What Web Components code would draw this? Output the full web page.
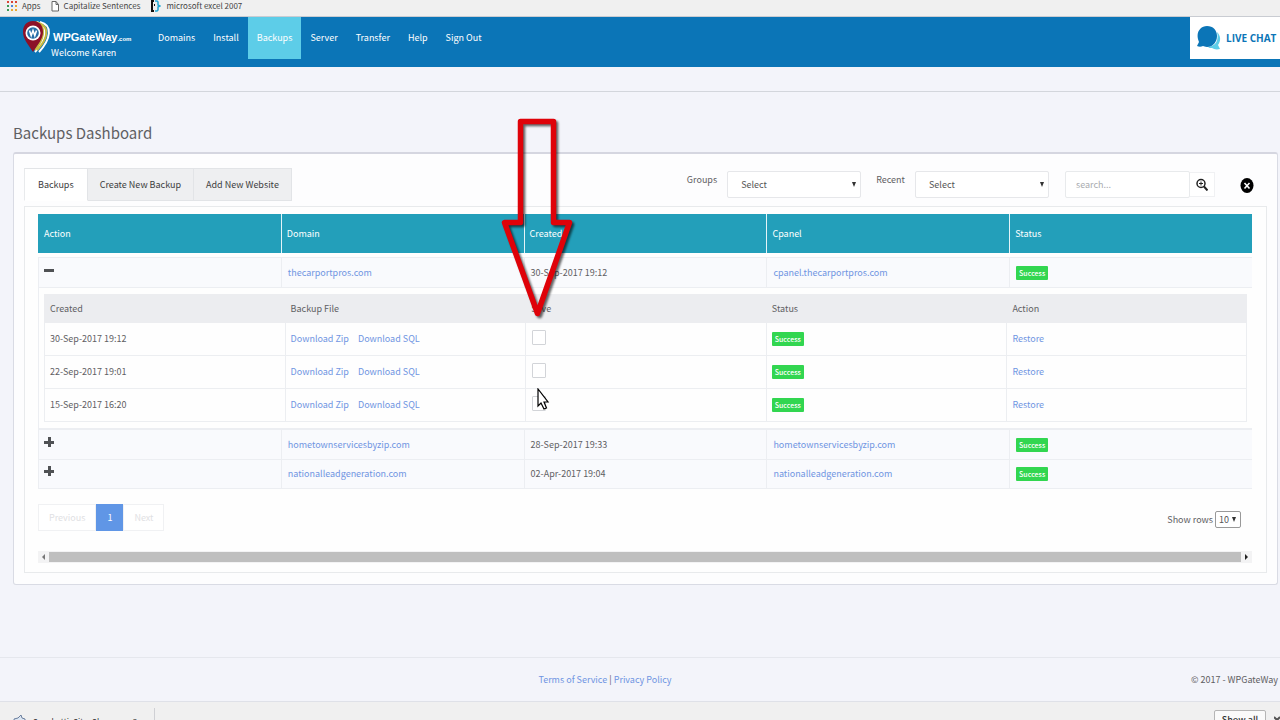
<!DOCTYPE html>
<html lang="en">
<head>
<meta charset="utf-8">
<title>Backups Dashboard</title>
<style>
    :root {
        --text: #5f6063;
        --link: #7095e2;
        --line: #e8eaec;
        --blue: #0b75b7;
        --teal: #239fba;
    }
    html { height: 100%; }
    body {
        margin: 0;
        height: 100%;
        overflow: hidden;
        position: relative;
        background: #f3f4fa;
        color: var(--text);
        font: 9px/16px "Noto Sans CJK SC", "Open Sans", sans-serif;
    }
</style>
</head>
<body>
    <bookmarks-bar></bookmarks-bar>
    <site-header user="Karen"></site-header>
    <page-title>Backups Dashboard</page-title>
    <backup-panel>
        <backup-table></backup-table>
        <table-pager></table-pager>
        <scroll-track></scroll-track>
    </backup-panel>
    <site-footer></site-footer>
    <download-shelf></download-shelf>
    <arrow-callout></arrow-callout>
    <mouse-pointer></mouse-pointer>

<script>
class BookmarksBar extends HTMLElement {
    connectedCallback() {
        this.attachShadow({ mode: 'open' });
        this.shadowRoot.innerHTML = `
            <style>
                :host {
                    display: flex;
                    gap: 10px;
                    height: 16px;
                    padding-left: 7px;
                    background: #f0f0f0;
                    border-bottom: 1px solid #c9ccd2;
                    overflow: hidden;
                    font-size: 8px;
                }
                a {
                    display: flex;
                    align-items: center;
                    gap: 5px;
                    height: 12px;
                    color: #444;
                    text-decoration: none;
                    white-space: nowrap;
                }
                svg { display: block; }
            </style>
            <a href="#"><svg width="10" height="12" viewBox="0 0 10 12">
                <path fill="#d94436" d="M0 1h2v2H0zM4 1h2v2H4zM8 1h2v2H8z"/>
                <path fill="#3a9a57" d="M0 5h2v2H0z"/><path fill="#4a86d8" d="M4 5h2v2H4z"/><path fill="#e7a935" d="M8 5h2v2H8z"/>
                <path fill="#3a9a57" d="M0 9h2v2H0z"/><path fill="#e7a935" d="M4 9h2v2H4zM8 9h2v2H8z"/>
            </svg>Apps</a>
            <a href="#"><svg width="8" height="12" viewBox="0 0 8 12" fill="#fff" stroke="#666">
                <path d="M1 1.500h4l2.500 3v6.500h-6.500zM5 1.500v3h2.500"/>
            </svg>Capitalize Sentences</a>
            <a href="#"><svg width="11" height="12" viewBox="0 0 11 12" fill="none">
                <path stroke="#111" stroke-width="2" d="M4 1H2v10h2"/><path fill="#111" d="M4 4h1v2H4z"/>
                <path stroke="#22a8d4" stroke-width="1.500" d="M5 1h2l1 1v3l2 1-2 1v3l-1 1H5"/>
            </svg>microsoft excel 2007</a>
        `;
    }
}

class SiteHeader extends HTMLElement {
    connectedCallback() {
        const items = ['Domains', 'Install', 'Backups', 'Server', 'Transfer', 'Help', 'Sign Out'];
        this.attachShadow({ mode: 'open' });
        this.shadowRoot.innerHTML = `
            <style>
                :host {
                    display: block;
                    height: 74px;
                    border-bottom: 1px solid #d3d6dc;
                }
                header {
                    display: flex;
                    align-items: flex-start;
                    height: 50px;
                    background: var(--blue);
                    color: #fff;
                }
                .logo {
                    display: flex;
                    box-sizing: border-box;
                    width: 149px;
                    padding: 4px 0 0 22px;
                    color: inherit;
                    text-decoration: none;
                }
                .logo svg { flex: none; }
                .words { line-height: 14px; padding-top: 9px; margin-left: -1px; white-space: nowrap; }
                .brand {
                    display: block;
                    margin-left: 2px;
                    font: bold 11px/14px "Liberation Sans", sans-serif;
                }
                .brand small { font-size: 6px; }
                nav { display: flex; flex: 1; }
                nav a {
                    padding: 0 9px;
                    line-height: 42px;
                    color: #fff;
                    text-decoration: none;
                }
                nav a.active { background: #5dcde8; }
                .chat {
                    display: flex;
                    align-items: center;
                    gap: 5px;
                    width: 90px;
                    height: 42px;
                    padding: 0 0 0 7px;
                    box-sizing: border-box;
                    border: 0;
                    background: #fff;
                    color: var(--blue);
                    font: bold 10px/16px "Open Sans", sans-serif;
                    white-space: nowrap;
                }
            </style>
            <header>
                <a href="#" class="logo">
                    <svg width="30" height="32" viewBox="0 0 30 32">
                        <g fill="none" stroke-width="2">
                            <path stroke="#fff" d="M18 1c13 3 11 17-1 30"/>
                            <path stroke="#fff" d="M15 1c12 4 9 17-2 30"/>
                            <path stroke="#c9ba3e" d="M14 1c11 4 8 17-1 28"/>
                            <path stroke="#c9ba3e" d="M17 2c11 4 9 16-2 27"/>
                        </g>
                        <path fill="#8c1028" d="M11 0C4 0 1 5 1 11c0 7 5 12 10 20 5-8 10-13 10-20C21 5 18 0 11 0z"/>
                        <circle cx="11" cy="12" r="7.500" fill="#fff"/>
                        <circle cx="11" cy="12" r="5.800" fill="#256da7"/>
                        <path fill="none" stroke="#fff" stroke-width="1.600" d="M7.500 9.500l1.700 5 1.800-5 1.800 5 1.700-5"/>
                    </svg>
                    <span class="words"><span class="brand">WPGateWay<small>.com</small></span>Welcome ${this.getAttribute('user')}</span>
                </a>
                <nav>${items.map(name => `<a href="#"${name === 'Backups' ? ' class="active"' : ''}>${name}</a>`).join('')}</nav>
                <button class="chat">
                    <svg width="24" height="24" viewBox="0 0 24 24">
                        <path fill="#5dcde8" d="M20 6c4 4 4 9 1 13l2 4c-4 1-6 0-8-1-2 0-3 0-4-1 8-1 11-7 9-15z"/>
                        <path fill="var(--blue)" d="M10 0c6 0 10 4 10 10s-4 11-10 11c-2 0-3-1-4-1-2 1-4 1-6 0l2-4C-2 7 3 0 10 0z"/>
                    </svg>LIVE CHAT
                </button>
            </header>
        `;
    }
}

class PageTitle extends HTMLElement {
    connectedCallback() {
        this.attachShadow({ mode: 'open' });
        this.shadowRoot.innerHTML = `
            <style>
                :host { display: block; padding: 29px 13px 7px; }
                h1 { margin: 0; font-size: 15px; line-height: 24px; font-weight: 400; }
            </style>
            <h1><slot></slot></h1>
        `;
    }
}

// Select with a small triangle laid in the same grid cell
class DropDown extends HTMLElement {
    connectedCallback() {
        this.attachShadow({ mode: 'open' });
        this.shadowRoot.innerHTML = `
            <style>
                :host { display: block; }
                label {
                    display: flex;
                    gap: var(--label-gap, 10px);
                    line-height: 18px;
                    white-space: nowrap;
                }
                .box { display: grid; width: var(--box-width, 134px); align-items: center; }
                select, svg { grid-area: 1 / 1; }
                select {
                    appearance: none;
                    box-sizing: border-box;
                    width: 100%;
                    height: var(--box-height, 27px);
                    margin: 0;
                    padding: 0 0 0 var(--box-indent, 13px);
                    border: 1px solid var(--box-line, #e6e7ea);
                    border-radius: 2px;
                    background: #fff;
                    color: #555;
                    font: inherit;
                    line-height: 15px;
                }
                svg { justify-self: end; margin-right: 5px; pointer-events: none; }
            </style>
            <label>${this.getAttribute('label')}
                <span class="box">
                    <select><option>${this.getAttribute('value')}</option></select>
                    <svg width="4" height="5" viewBox="0 0 4 5"><path fill="#333" d="M0 0h4L2 5z"/></svg>
                </span>
            </label>
        `;
    }
}

class BackupPanel extends HTMLElement {
    connectedCallback() {
        this.attachShadow({ mode: 'open' });
        this.shadowRoot.innerHTML = `
            <style>
                :host {
                    display: block;
                    margin: 0 2px 0 13px;
                    padding: 14px 10px 11px;
                    border: 1px solid #d9dbe4;
                    border-top: 2px solid #d5d6e0;
                    border-radius: 3px;
                    background: #fdfdfe;
                }
                .bar { display: flex; align-items: flex-start; height: 38px; }
                .tabs { display: flex; flex: 1; }
                .tabs button {
                    height: 33px;
                    padding: 0 12px;
                    border: 1px solid #e2e4e7;
                    border-left: 0;
                    background: #eeeff1;
                    color: #3c3d40;
                    font: inherit;
                }
                .tabs button.active {
                    padding: 0 13px;
                    border-left: 1px solid var(--line);
                    border-bottom-color: #fff;
                    background: #fff;
                }
                .filters { display: flex; align-items: flex-start; gap: 15px; padding-top: 3px; }
                .search { display: flex; align-items: center; margin-left: 1px; }
                .search input {
                    box-sizing: border-box;
                    width: 125px;
                    height: 27px;
                    padding: 0 10px;
                    border: 1px solid var(--line);
                    border-radius: 2px;
                    background: #fff;
                    font: inherit;
                }
                .search input::placeholder { color: #aaacb0; }
                .search button, .close {
                    display: grid;
                    place-items: center;
                    width: 25px;
                    height: 25px;
                    padding: 0;
                    border: 1px solid #f0f1f3;
                    border-left: 0;
                    background: #fff;
                }
                .close { margin: 2px 8px 0 4px; border: 0; background: none; }
                .body { padding: 7px 14px 9px 13px; border: 1px solid var(--line); background: #fefefe; }
            </style>
            <div class="bar">
                <div class="tabs" role="tablist">
                    <button role="tab" class="active" aria-selected="true">Backups</button>
                    <button role="tab">Create New Backup</button>
                    <button role="tab">Add New Website</button>
                </div>
                <form class="filters">
                    <drop-down label="Groups" value="Select"></drop-down>
                    <drop-down label="Recent" value="Select"></drop-down>
                    <div class="search">
                        <input type="text" placeholder="search..." aria-label="Search">
                        <button type="button" aria-label="Find"><svg width="12" height="13" viewBox="0 0 12 13" fill="none" stroke="#222">
                            <circle cx="5" cy="5.500" r="4" stroke-width="1.500"/><path d="M3 5.500h4M5 3.500v4"/><path stroke-width="2" d="M8 8.500l3.500 4"/>
                        </svg></button>
                    </div>
                    <button type="button" class="close" aria-label="Clear"><svg width="14" height="15" viewBox="0 0 14 15">
                        <ellipse cx="7" cy="7.500" rx="6.500" ry="7.500"/><path stroke="#fff" stroke-width="1.600" d="M4.500 5l5 5.500M9.500 5l-5 5.500"/>
                    </svg></button>
                </form>
            </div>
            <div class="body"><slot></slot></div>
        `;
    }
}

class StatusBadge extends HTMLElement {
    connectedCallback() {
        this.attachShadow({ mode: 'open' });
        this.shadowRoot.innerHTML = `
            <style>
                :host {
                    display: block;
                    width: 32px;
                    border-radius: 1px;
                    background: #32d650;
                    color: #fff;
                    font-size: 7px;
                    line-height: 14px;
                    font-weight: 500;
                    text-align: center;
                }
            </style>
            <slot></slot>
        `;
    }
}

class BackupTable extends HTMLElement {
    connectedCallback() {
        const sites = [
            { domain: 'thecarportpros.com', created: '30-Sep-2017 19:12', cpanel: 'cpanel.thecarportpros.com', backups: ['30-Sep-2017 19:12', '22-Sep-2017 19:01', '15-Sep-2017 16:20'] },
            { domain: 'hometownservicesbyzip.com', created: '28-Sep-2017 19:33', cpanel: 'hometownservicesbyzip.com' },
            { domain: 'nationalleadgeneration.com', created: '02-Apr-2017 19:04', cpanel: 'nationalleadgeneration.com' }
        ];

        const backupRow = created => `
            <tr>
                <td>${created}</td>
                <td><a href="#">Download Zip</a><a href="#" class="sql">Download SQL</a></td>
                <td><input type="checkbox" aria-label="Save ${created}"></td>
                <td><status-badge>Success</status-badge></td>
                <td><a href="#">Restore</a></td>
            </tr>`;

        const detail = backups => `
            <tr>
                <td class="detail" colspan="5">
                    <table class="inner">
                        <thead><tr><th>Created</th><th>Backup File</th><th>Save</th><th>Status</th><th>Action</th></tr></thead>
                        <tbody>${backups.map(backupRow).join('')}</tbody>
                    </table>
                </td>
            </tr>`;

        const siteRow = site => `
            <tr class="site">
                <td><button aria-label="Toggle ${site.domain}"><svg width="10" height="10" viewBox="0 0 10 10">
                    <path fill="#4f5154" d="${site.backups ? 'M0 4h10v3H0z' : 'M4 0h3v4h3v3H7v3H4V7H0V4h4z'}"/>
                </svg></button></td>
                <td><a href="#">${site.domain}</a></td>
                <td>${site.created}</td>
                <td><a href="#">${site.cpanel}</a></td>
                <td><status-badge>Success</status-badge></td>
            </tr>
            ${site.backups ? detail(site.backups) : ''}`;

        this.attachShadow({ mode: 'open' });
        this.shadowRoot.innerHTML = `
            <style>
                :host { display: block; }
                table {
                    width: 100%;
                    table-layout: fixed;
                    border-collapse: separate;
                    border-spacing: 0;
                }
                th, td { box-sizing: border-box; padding: 0 5px; text-align: left; white-space: nowrap; }
                th { font-weight: 400; }
                a { color: var(--link); text-decoration: none; }
                .outer > thead th {
                    height: 39px;
                    border-left: 1px solid #e4f4f8;
                    background: var(--teal);
                    color: #fff;
                }
                .outer > thead th:first-child { border-left-color: var(--teal); }
                .gap td { height: 4px; padding: 0; }
                .site td {
                    height: 30px;
                    padding-left: 6px;
                    border: 1px solid #eceef2;
                    border-width: 1px 0 0 1px;
                    background: #f9fafd;
                }
                .site td:first-child { padding-left: 5px; }
                .outer > tbody > tr:last-child td { border-bottom-width: 1px; }
                .site button {
                    display: block;
                    margin: 0 0 6px;
                    padding: 0;
                    border: 0;
                    background: none;
                }
                .site svg { display: block; }
                .detail {
                    padding: 6px 5px 5px;
                    border: 1px solid #eceef2;
                    border-width: 1px 0 1px 1px;
                    background: #fefefe;
                }
                .inner { padding: 0 0 1px; }
                .inner th { height: 29px; padding-left: 6px; background: #ecedf0; }
                .inner td {
                    height: 33px;
                    border: 1px solid #eceef1;
                    border-width: 0 0 1px 1px;
                    background: #fefefe;
                }
                .inner td:last-child { border-right-width: 1px; }
                .sql { margin-left: 9px; }
                input {
                    display: block;
                    appearance: none;
                    box-sizing: border-box;
                    width: 14px;
                    height: 15px;
                    margin: 0 0 4px 1px;
                    border: 1px solid #d2d4d8;
                    border-radius: 1px;
                    background: #fff;
                }
            </style>
            <table class="outer">
                <thead><tr><th>Action</th><th>Domain</th><th>Created</th><th>Cpanel</th><th>Status</th></tr></thead>
                <tbody>
                    <tr class="gap"><td colspan="5"></td></tr>
                    ${sites.map(siteRow).join('')}
                </tbody>
            </table>
        `;
    }
}

class TablePager extends HTMLElement {
    connectedCallback() {
        this.attachShadow({ mode: 'open' });
        this.shadowRoot.innerHTML = `
            <style>
                :host {
                    display: flex;
                    justify-content: space-between;
                    align-items: center;
                    padding: 15px 11px 20px 0;
                }
                .pages { display: flex; }
                button {
                    height: 27px;
                    padding: 0 10px;
                    border: 1px solid #f0f1f3;
                    background: #fff;
                    color: #dfe1e4;
                    font: inherit;
                }
                .current { border-color: #6096e6; background: #6096e6; color: #fff; }
                drop-down {
                    --label-gap: 2px;
                    --box-width: 26px;
                    --box-height: 17px;
                    --box-indent: 3px;
                    --box-line: #999;
                    margin-top: 4px;
                }
            </style>
            <div class="pages">
                <button disabled>Previous</button><button class="current">1</button><button disabled>Next</button>
            </div>
            <drop-down label="Show rows" value="10"></drop-down>
        `;
    }
}

class ScrollTrack extends HTMLElement {
    connectedCallback() {
        this.attachShadow({ mode: 'open' });
        this.shadowRoot.innerHTML = `
            <style>
                :host { display: flex; align-items: center; height: 12px; background: #f3f3f4; }
                button {
                    display: grid;
                    place-items: center;
                    width: 11px;
                    height: 12px;
                    padding: 0;
                    border: 0;
                    background: none;
                }
                .thumb { flex: 1; height: 10px; background: #bfbfbf; }
            </style>
            <button aria-label="Scroll left"><svg width="3" height="6" viewBox="0 0 3 6"><path fill="#777" d="M3 0v6L0 3z"/></svg></button>
            <div class="thumb"></div>
            <button aria-label="Scroll right"><svg width="3" height="6" viewBox="0 0 3 6"><path fill="#222" d="M0 0v6l3-3z"/></svg></button>
        `;
    }
}

class SiteFooter extends HTMLElement {
    connectedCallback() {
        this.attachShadow({ mode: 'open' });
        this.shadowRoot.innerHTML = `
            <style>
                :host {
                    display: grid;
                    grid-template-columns: 1fr auto 1fr;
                    margin-top: 72px;
                    padding: 14px 2px 13px;
                    border-top: 1px solid #e5e7ed;
                }
                .links { grid-column: 2; margin-right: 70px; }
                .copy { text-align: right; }
                a { color: var(--link); text-decoration: none; }
            </style>
            <span class="links"><a href="#">Terms of Service</a> | <a href="#">Privacy Policy</a></span>
            <span class="copy">© 2017 - WPGateWay</span>
        `;
    }
}

// Browser download bar; runs off the bottom of the window
class DownloadShelf extends HTMLElement {
    connectedCallback() {
        this.attachShadow({ mode: 'open' });
        this.shadowRoot.innerHTML = `
            <style>
                :host {
                    display: flex;
                    justify-content: space-between;
                    height: 40px;
                    padding: 6px 0 0 13px;
                    border-top: 1px solid #dfe1e8;
                    background: #f0f0f0;
                    color: #333;
                }
                .file {
                    display: flex;
                    gap: 7px;
                    width: 141px;
                    padding-top: 6px;
                    border-right: 1px solid #cfd0d4;
                    font-size: 8px;
                }
                .end { display: flex; gap: 8px; align-items: flex-start; }
                button { border: 0; padding: 0; background: none; color: inherit; font: inherit; }
                .all {
                    width: 52px;
                    height: 26px;
                    padding-bottom: 6px;
                    margin-top: 2px;
                    border: 1px solid #b5b5b5;
                    border-radius: 2px;
                    background: #fafafa;
                    font-weight: 500;
                }
            </style>
            <div class="file">
                <svg width="13" height="14" viewBox="0 0 13 14"><path fill="#dce6f2" stroke="#6b7f9e" d="M1 5l4-1 3-3 1 3 3 1v8H2z"/><path fill="#4f78b5" d="M4 6h5v4H4z"/></svg>
                <span>Spaghetti_Site_Shop....mp3</span>
            </div>
            <div class="end">
                <button class="all">Show all</button>
                <button aria-label="Close"><svg width="6" height="20" viewBox="0 0 6 20"><path stroke="#555" stroke-width="2" d="M0 9l6 6M6 9l-6 6"/></svg></button>
            </div>
        `;
    }
}

class ArrowCallout extends HTMLElement {
    connectedCallback() {
        this.attachShadow({ mode: 'open' });
        this.shadowRoot.innerHTML = `
            <style>
                :host { position: absolute; left: 500px; top: 116px; pointer-events: none; }
                svg { display: block; filter: drop-shadow(2px 2px 1px rgba(0, 0, 0, 0.600)); }
            </style>
            <svg width="80" height="208" viewBox="0 0 80 208">
                <path fill="none" stroke="#df0209" stroke-width="5.500" stroke-linejoin="round" d="M20.500 5.500h33v101h16L37.500 197.500 4.500 106.500h16z"/>
            </svg>
        `;
    }
}

class MousePointer extends HTMLElement {
    connectedCallback() {
        this.attachShadow({ mode: 'open' });
        this.shadowRoot.innerHTML = `
            <style>
                :host { position: absolute; left: 537px; top: 388px; pointer-events: none; }
                svg { display: block; }
            </style>
            <svg width="13" height="23" viewBox="0 0 13 23">
                <path fill="#fff" stroke="#000" stroke-width="1.200" d="M1 1v17l3-3 3 6 2.500-1-2.500-6h4z"/>
            </svg>
        `;
    }
}

customElements.define('bookmarks-bar', BookmarksBar);
customElements.define('site-header', SiteHeader);
customElements.define('page-title', PageTitle);
customElements.define('drop-down', DropDown);
customElements.define('status-badge', StatusBadge);
customElements.define('backup-panel', BackupPanel);
customElements.define('backup-table', BackupTable);
customElements.define('table-pager', TablePager);
customElements.define('scroll-track', ScrollTrack);
customElements.define('site-footer', SiteFooter);
customElements.define('download-shelf', DownloadShelf);
customElements.define('arrow-callout', ArrowCallout);
customElements.define('mouse-pointer', MousePointer);
</script>
</body>
</html>
